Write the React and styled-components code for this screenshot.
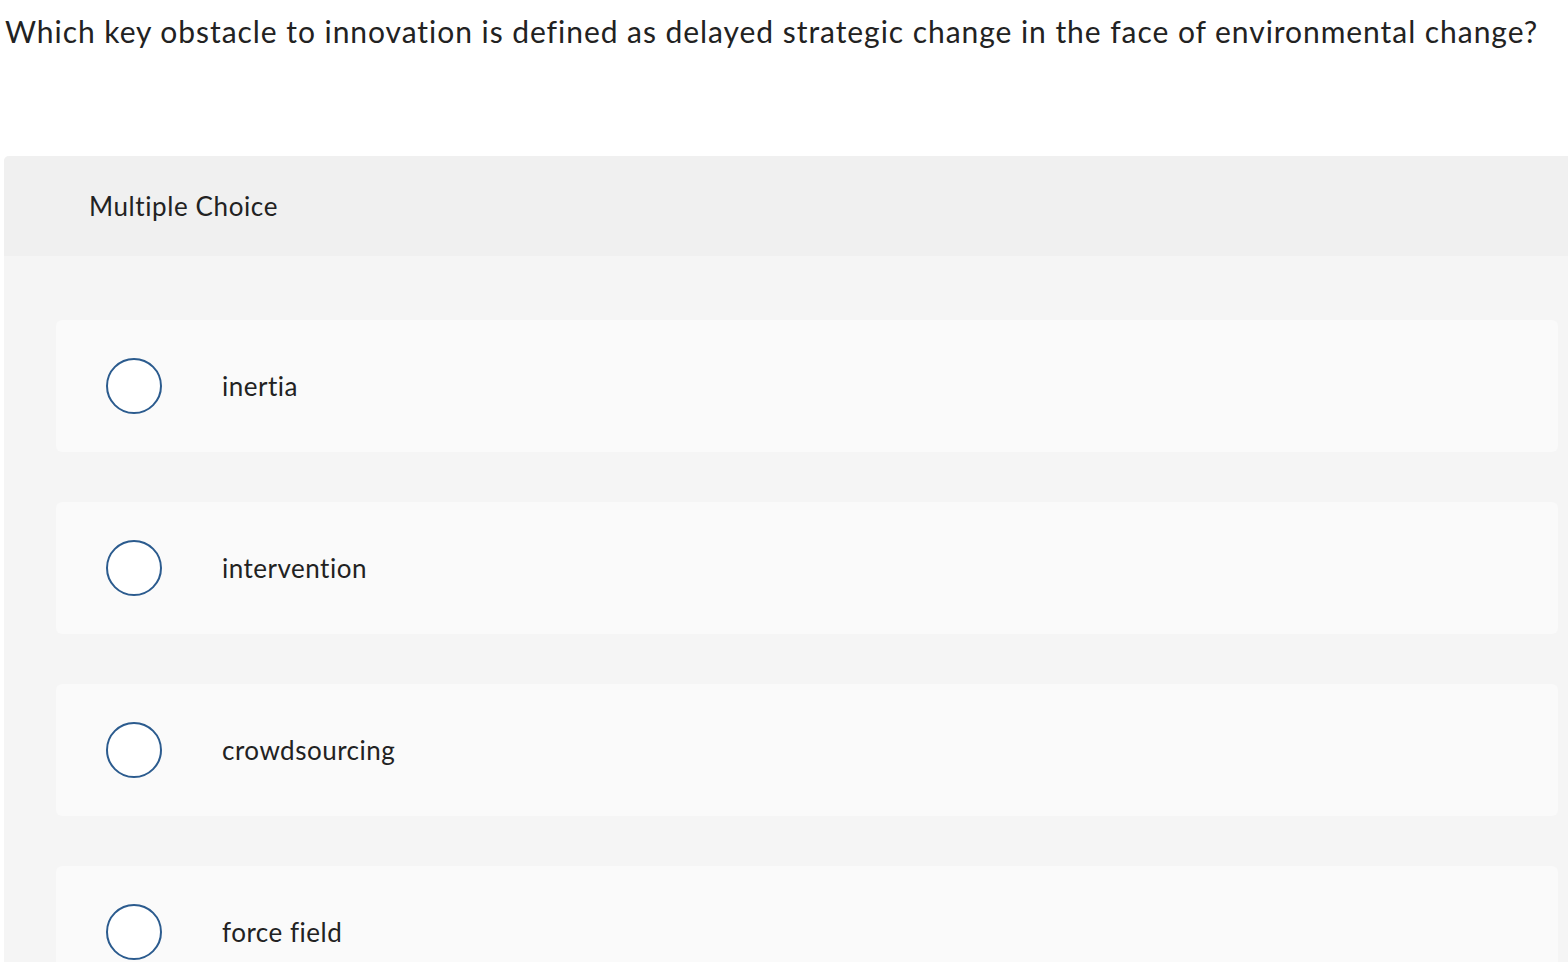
import styled, {createGlobalStyle} from 'styled-components'

const GlobalStyle = createGlobalStyle`
  html, body {
    margin: 0;
    padding: 0;
    background: #ffffff;
    overflow: hidden;
  }
  body {
    font-family: Lato, "Open Sans", sans-serif;
    font-variant-ligatures: none;
    color: #222222;
  }
`

const Page = styled.div`
  width: 1568px;
  height: 962px;
  overflow: hidden;
`

const Question = styled.div`
  padding: 11px 0 0 5px;
  height: 156px;
  box-sizing: border-box;
  font-size: 30px;
  line-height: 40px;
  letter-spacing: 0.95px;
  white-space: nowrap;
  color: #222222;
`

const Panel = styled.div`
  margin-left: 4px;
  width: 1606px;
  border-radius: 5px 5px 0 0;
  overflow: hidden;
  background: #f5f5f5;
`

const PanelHeader = styled.div`
  height: 100px;
  background: #f0f0f0;
  display: flex;
  align-items: center;
  padding-left: 85px;
  font-size: 26px;
  letter-spacing: 0.6px;
  color: #222222;
`

const OptionList = styled.div`
  display: flex;
  flex-direction: column;
  gap: 50px;
  padding: 64px 52px 64px 52px;
`

const OptionCard = styled.label`
  display: flex;
  align-items: center;
  height: 132px;
  padding-left: 50px;
  background: #fafafa;
  border-radius: 6px;
  cursor: pointer;
`

const Radio = styled.span`
  width: 56px;
  height: 56px;
  box-sizing: border-box;
  border-radius: 50%;
  border: 2px solid #2b5b8e;
  background: #ffffff;
  flex-shrink: 0;
`

const OptionText = styled.span`
  margin-left: 60px;
  font-size: 26px;
  letter-spacing: 0.5px;
  color: #222222;
`

const options = ['inertia', 'intervention', 'crowdsourcing', 'force field']

export default function App() {
    return (
        <Page>
            <GlobalStyle/>
            <Question>
                Which key obstacle to innovation is defined as delayed strategic change in the face of environmental change?
            </Question>
            <Panel>
                <PanelHeader>Multiple Choice</PanelHeader>
                <OptionList>
                    {options.map((o) => (
                        <OptionCard key={o}>
                            <Radio/>
                            <OptionText>{o}</OptionText>
                        </OptionCard>
                    ))}
                </OptionList>
            </Panel>
        </Page>
    )
}
